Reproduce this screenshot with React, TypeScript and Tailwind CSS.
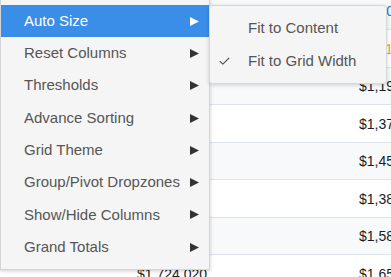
import { Check } from "lucide-react";

const menuItems = [
  "Auto Size",
  "Reset Columns",
  "Thresholds",
  "Advance Sorting",
  "Grid Theme",
  "Group/Pivot Dropzones",
  "Show/Hide Columns",
  "Grand Totals",
];

const rows = [
  { left: "$1,512,330", right: "$1,206,389", color: "text-[#2a6fdb]" },
  { left: "$1,498,210", right: "$1,111,520", color: "text-[#f0a12c]" },
  { left: "$1,601,870", right: "$1,195,210", color: "text-[#181d1f]" },
  { left: "$1,554,090", right: "$1,372,110", color: "text-[#181d1f]" },
  { left: "$1,633,450", right: "$1,458,330", color: "text-[#181d1f]" },
  { left: "$1,587,260", right: "$1,385,720", color: "text-[#181d1f]" },
  { left: "$1,690,310", right: "$1,580,440", color: "text-[#181d1f]" },
  { left: "$1,724,020", right: "$1,653,900", color: "text-[#181d1f]" },
];

function Arrow({ white }: { white?: boolean }) {
  return (
    <svg width="9" height="9" viewBox="0 0 9 9">
      <path d="M0 0 L9 4.5 L0 9 Z" fill={white ? "#ffffff" : "#333333"} />
    </svg>
  );
}

export default function App() {
  return (
    <div
      className="relative w-[391px] h-[277px] overflow-hidden bg-white"
      style={{ fontFamily: '"Liberation Sans", Arial, sans-serif' }}
    >
      <div className="mt-[-7.5px] w-[460px]">
        {rows.map((r, i) => (
          <div
            key={i}
            className={`flex h-[37.5px] items-center pt-[2px] border-b border-[#dde2eb] text-[14px] ${
              i % 2 === 0 ? "bg-[#f8f9fb]" : "bg-white"
            }`}
          >
            <div className="w-[220px] pr-[13px] text-right text-[#181d1f]">{r.left}</div>
            <div className={`flex-1 pl-[139px] ${r.color}`}>{r.right}</div>
          </div>
        ))}
      </div>

      <div className="absolute left-0 top-[-1px] w-[210px] bg-[#f5f5f5] border border-[#d4d4d4] pt-[5px] pb-[6px] shadow-[0_1px_4px_rgba(0,0,0,0.2)]">
        {menuItems.map((label, i) => (
          <div
            key={label}
            className={`flex h-[32.3px] items-center justify-between pl-[23px] pr-[10px] text-[15px] ${
              i === 0 ? "bg-[#3b8ee8] text-white" : "text-[#555555]"
            }`}
          >
            <span>{label}</span>
            <Arrow white={i === 0} />
          </div>
        ))}
      </div>

      <div className="absolute left-[209px] top-[5px] w-[178px] bg-[#f5f5f5] border border-[#d8d8d8] rounded-[3px] py-[6px] shadow-[0_1px_4px_rgba(0,0,0,0.18)]">
        <div className="flex h-[32.5px] items-center pl-[38px] text-[15px] text-[#555555]">
          Fit to Content
        </div>
        <div className="relative flex h-[32.5px] items-center pl-[38px] text-[15px] text-[#555555]">
          <Check className="absolute left-[8px] top-[10px]" size={13} strokeWidth={2} color="#555555" />
          Fit to Grid Width
        </div>
      </div>
    </div>
  );
}
